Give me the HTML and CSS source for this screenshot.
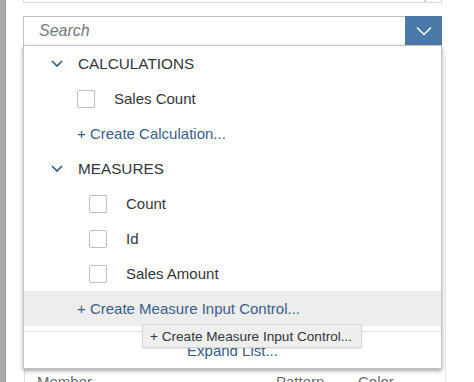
FILE: index.html
```
<!DOCTYPE html>
<html lang="en">
<head>
  <meta charset="UTF-8">
  <title>Measure Picker</title>
  <link rel="stylesheet" href="styles.css">
</head>
<body>

  <div class="page">
    <div class="rail"></div>

    <div class="main">
      <div class="field-stub"><span class="tick"></span></div>

      <!-- Search combo with open dropdown -->
      <div class="combo">
        <div class="search"><span class="placeholder">Search</span></div>
        <button class="arrow" type="button">
          <svg width="16" height="10" viewBox="0 0 16 10"><path d="M1 1.5 L8 8.5 L15 1.5" fill="none" stroke="#fff" stroke-width="1.5"/></svg>
        </button>

        <div class="popup">
          <div class="row group">
            <svg class="chev" width="12" height="8" viewBox="0 0 12 8"><path d="M1 1 L6 6 L11 1" fill="none" stroke="#2f5b85" stroke-width="1.6"/></svg>
            <span>CALCULATIONS</span>
          </div>
          <div class="row item">
            <span class="check"></span><span>Sales Count</span>
          </div>
          <div class="row link">+ Create Calculation...</div>

          <div class="row group">
            <svg class="chev" width="12" height="8" viewBox="0 0 12 8"><path d="M1 1 L6 6 L11 1" fill="none" stroke="#2f5b85" stroke-width="1.6"/></svg>
            <span>MEASURES</span>
          </div>
          <div class="row item nested">
            <span class="check"></span><span>Count</span>
          </div>
          <div class="row item nested">
            <span class="check"></span><span>Id</span>
          </div>
          <div class="row item nested">
            <span class="check"></span><span>Sales Amount</span>
          </div>
          <div class="row link hover">+ Create Measure Input Control...</div>

          <div class="footer">Expand List...</div>

          <div class="tooltip">+ Create Measure Input Control...</div>
        </div>
      </div>

      <!-- Panel underneath the dropdown -->
      <div class="panel">
        <div class="panel-head">
          <span>Member</span>
          <span>Pattern</span>
          <span>Color</span>
        </div>
      </div>
    </div>
  </div>

</body>
</html>
```

FILE: styles.css
```
body { margin: 0; font-family: "Liberation Sans", Arial, sans-serif; color: #32363a; background: #fff; }
.page { display: flex; height: 382px; overflow: hidden; }
.rail { width: 6px; background: #a8a8a8; border-right: 1px solid #9c9c9c; box-sizing: border-box; flex-shrink: 0; }
.main { padding-left: 17px; width: 425px; }

.field-stub {
  height: 3px; width: 419px; box-sizing: border-box;
  border: 1px solid #dadada; border-top: none; position: relative;
}
.tick { position: absolute; right: 15px; top: -1px; width: 2px; height: 3px; background: #d0d0d0; }

.combo { display: flex; margin-top: 13px; position: relative; width: 419px; }
.search {
  flex: 1; height: 30px; box-sizing: border-box;
  border: 1px solid #c2c2c2; border-right: none;
  display: flex; align-items: center; padding-left: 15px;
}
.placeholder { font-style: italic; font-size: 16px; color: #74777a; }
.arrow {
  width: 37px; height: 30px; border: none; padding: 0; margin: 0;
  background: #4a78a9; display: flex; align-items: center; justify-content: center;
}

.popup {
  position: absolute; top: 29px; left: 0; width: 419px; height: 324px;
  box-sizing: border-box; background: #fff; z-index: 2;
  border: 1px solid #c4c4c4;
  box-shadow: 0 2px 4px rgba(0, 0, 0, 0.35);
}
.row { height: 35px; display: flex; align-items: center; font-size: 15px; }
.group { padding-left: 27px; font-size: 15.3px; }
.group .chev { margin-right: 15px; margin-top: 1px; }
.item { padding-left: 53px; }
.item.nested { padding-left: 65px; }
.check {
  width: 18px; height: 18px; box-sizing: border-box;
  border: 1px solid #bfbfbf; border-radius: 2px; margin-right: 19px; background: #fff;
}
.link { padding-left: 53px; color: #3a5e89; }
.hover { background: #ededed; }

.footer {
  margin-top: 5px; border-top: 1px solid #e3e3e3; height: 36px;
  display: flex; align-items: center; justify-content: center;
  font-size: 15px; color: #3a5e89;
}

.tooltip {
  position: absolute; left: 118px; top: 278px; width: 220px; height: 24px;
  box-sizing: border-box; padding-left: 7px;
  display: flex; align-items: center;
  background: #efefef; border: 1px solid #d6d6d6; border-radius: 2px;
  box-shadow: 0 1px 2px rgba(0, 0, 0, 0.12);
  font-size: 13.6px; color: #32363a; white-space: nowrap;
}

.panel {
  margin-top: 10px; margin-left: 1px; width: 422px; height: 340px;
  box-sizing: border-box; border-left: 1px solid #dedede; border-right: 1px solid #e6e6e6;
  display: flex; flex-direction: column; justify-content: flex-end;
}
.panel-head {
  display: grid; grid-template-columns: 239px 82px 1fr;
  padding-left: 12px; font-size: 15px; color: #6a6d70; height: 20px; margin-bottom: 3px;
}
```
